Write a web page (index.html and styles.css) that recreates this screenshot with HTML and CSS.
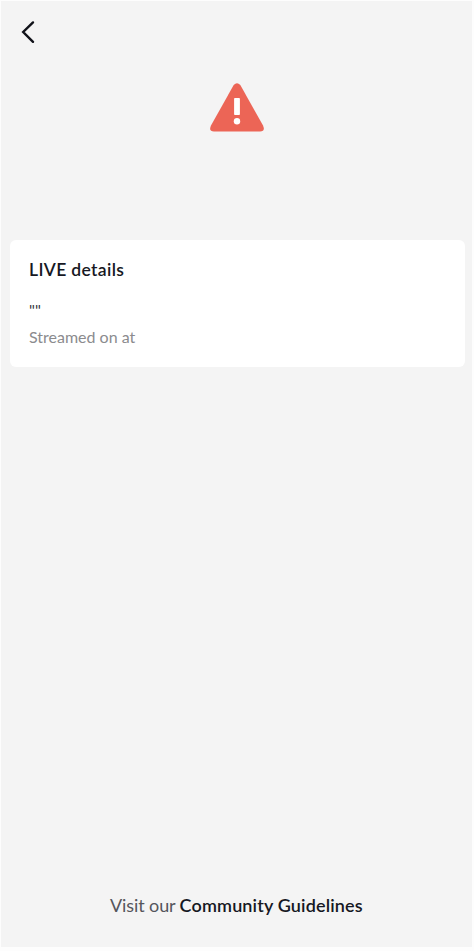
FILE: index.html
```html
<!DOCTYPE html>
<html lang="en">
<head>
<meta charset="utf-8">
<meta name="viewport" content="width=device-width, initial-scale=1">
<title>LIVE details</title>
<link rel="stylesheet" href="styles.css">
</head>
<body>
<div class="screen">
  <header class="nav">
    <svg class="back" width="16" height="24" viewBox="0 0 16 24" role="img" aria-label="Back"><path d="M13 2.400 3.200 12l9.800 9.800"/></svg>
  </header>
  <svg class="warning" width="54" height="49" viewBox="0 0 54 49" aria-hidden="true">
    <path class="sign" d="M23.700 2.100Q27-1.500 30.300 2.100L53 42.600Q55.600 48.300 50 48.500H4Q-1.600 48.300 1 42.600Z"/>
    <path class="mark" d="M24.900 15h4.200a.8.8 0 0 1 .8.8v15.400a.8.8 0 0 1-.8.8h-4.200a.8.8 0 0 1-.8-.8V15.800a.8.8 0 0 1 .8-.8Z"/>
    <circle class="mark" cx="27" cy="38.200" r="3.200"/>
  </svg>
  <main class="card">
    <h1 class="title">LIVE details</h1>
    <p class="name">""</p>
    <p class="time">Streamed on at</p>
  </main>
  <footer class="footer"><span class="visit">Visit our</span><a class="link">Community Guidelines</a></footer>
</div>
</body>
</html>
```
FILE: styles.css
```css
* { box-sizing: border-box; margin: 0; padding: 0; }
body {
  height: 951px;
  padding: 1px 2px 4px 1px;
  background: #fdfdfd;
  font-family: Lato, "Liberation Sans", sans-serif;
}
.screen {
  height: 946px;
  display: flex;
  flex-direction: column;
  background: #f4f4f4;
}
.nav { height: 81px; padding: 19px 0 0 19px; }
.back { display: block; fill: none; stroke: #111219; stroke-width: 2.4; stroke-linecap: round; stroke-linejoin: miter; }
.warning { display: block; flex: none; margin: 1px 0 -1px 209px; }
.sign { fill: #ec6556; }
.mark { fill: #fff; }
.card {
  height: 127px;
  margin: 109px 7px 0 9px;
  padding: 17px 19px 0;
  border-radius: 6px;
  background: #fff;
}
.title { font-size: 17.5px; line-height: 25px; font-weight: 600; letter-spacing: .35px; color: #161823; }
.name { margin-top: 16px; font-size: 16px; line-height: 24px; color: #393a42; }
.time { margin-top: 2px; font-size: 16px; line-height: 25px; color: #8b8b8e; }
.footer {
  margin-top: auto;
  padding: 0 0 29px 109px;
  display: flex;
  gap: 4px;
  font-size: 18px;
  line-height: 26px;
  white-space: nowrap;
}
.visit { letter-spacing: -.1px; color: #55565c; }
.link { font-weight: 600; letter-spacing: .15px; color: #161823; }
```
